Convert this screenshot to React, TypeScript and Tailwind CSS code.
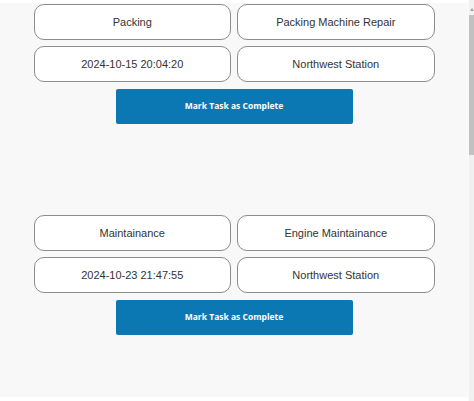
const tasks = [
	{ category: "Packing", title: "Packing Machine Repair", time: "2024-10-15 20:04:20", station: "Northwest Station" },
	{ category: "Maintainance", title: "Engine Maintainance", time: "2024-10-23 21:47:55", station: "Northwest Station" },
];

function Field({ children }: { children: React.ReactNode }) {
	return (
		<div className="h-[36px] flex items-center justify-center rounded-[10px] border border-[#8c8c8c] bg-white text-[11px] text-[#333] font-['Liberation_Sans',Arial,sans-serif]">
			{children}
		</div>
	);
}

function TaskCard({ task }: { task: (typeof tasks)[number] }) {
	return (
		<div className="w-[401px] mx-auto">
			<div className="grid grid-cols-2 gap-[6px]">
				<Field>{task.category}</Field>
				<Field>{task.title}</Field>
				<Field>{task.time}</Field>
				<Field>{task.station}</Field>
			</div>
			<button
				type="button"
				className="block mx-auto mt-[7px] h-[35px] w-[237px] rounded-[2px] bg-[#0c78b3] text-white text-[8.5px] font-bold font-['Open_Sans',sans-serif]"
			>
				Mark Task as Complete
			</button>
		</div>
	);
}

export default function App() {
	return (
		<div className="flex h-[401px] w-[474px] overflow-hidden bg-white">
			<div className="flex-1 mt-[3px] mb-[4px] bg-[#f8f8f8] pt-[1px] flex flex-col gap-[91px]">
				{tasks.map((t) => (
					<TaskCard key={t.time} task={t} />
				))}
			</div>
			<div className="w-[6px] bg-[#f1f1f1] border-l border-[#fafafa] flex flex-col items-center">
				<div className="mt-[8px] w-0 h-0 border-x-[2px] border-x-transparent border-b-[3px] border-b-[#a3a3a3]" />
				<div className="mt-[4px] h-[140px] w-full bg-[#c1c1c1]" />
			</div>
		</div>
	);
}
